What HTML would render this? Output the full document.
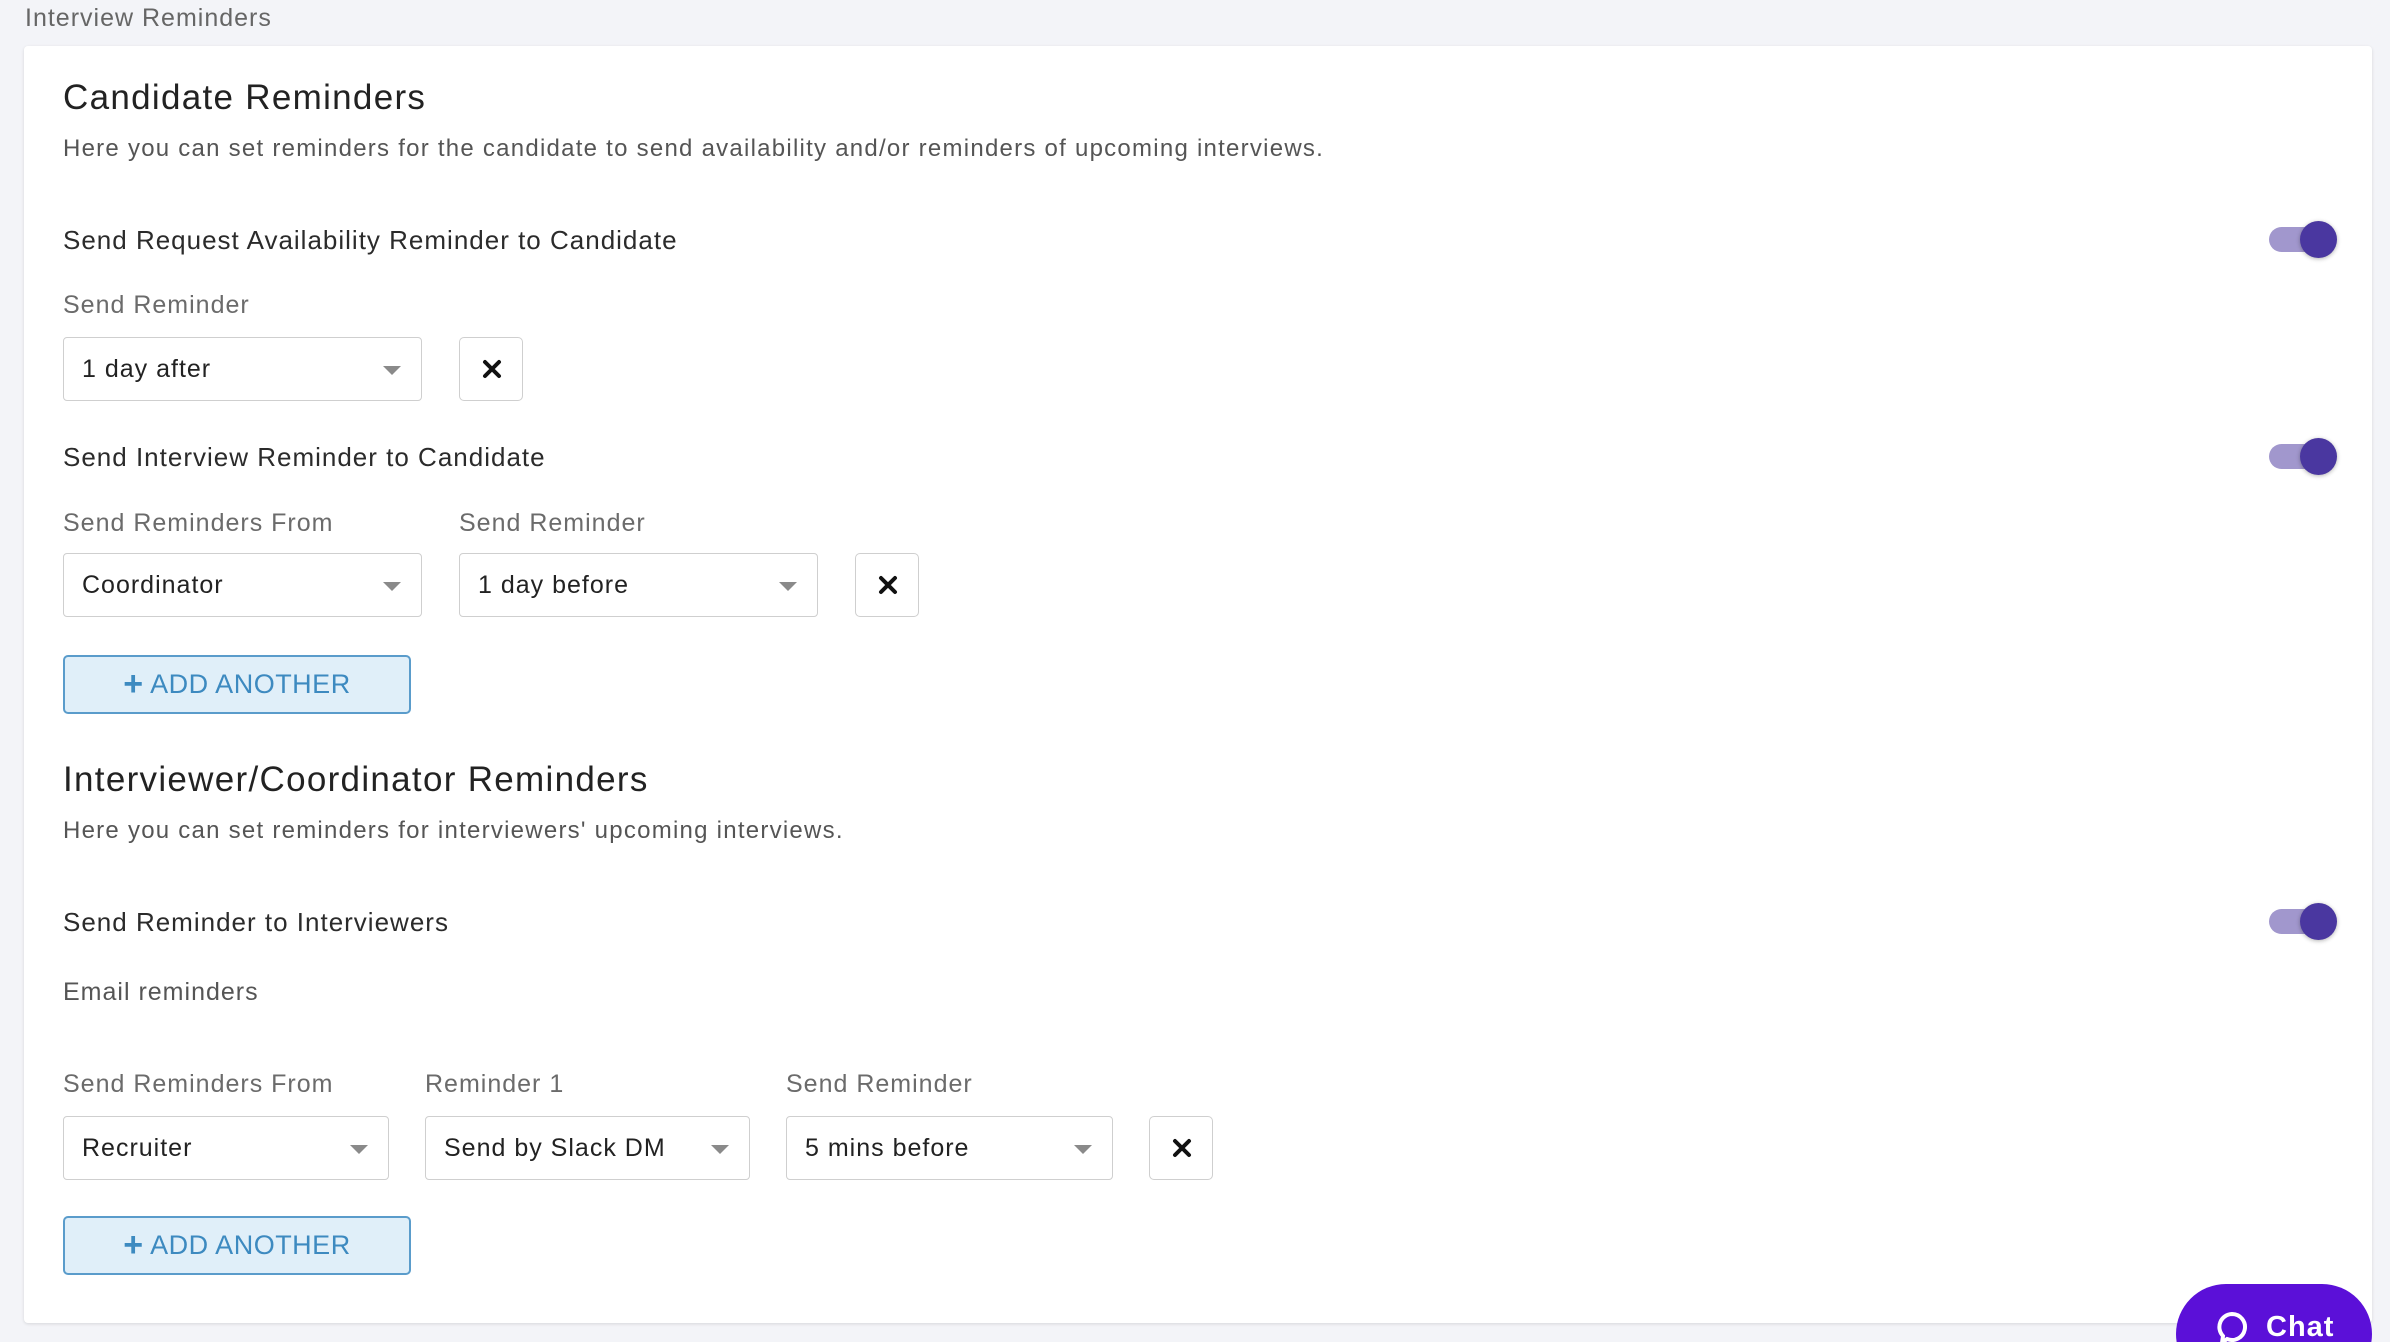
<!DOCTYPE html>
<html style="overflow:hidden;width:2390px;height:1342px"><head><meta charset="utf-8"><style>
*{box-sizing:border-box;margin:0;padding:0}
body{width:2390px;height:1342px;background:#f3f4f8;font-family:"Liberation Sans",sans-serif;position:relative;overflow:hidden;color:#333;letter-spacing:1px}
.a{position:absolute;white-space:nowrap;line-height:1}
.card{position:absolute;left:24px;top:46px;width:2348px;height:1277px;background:#fff;border-radius:4px;box-shadow:0 1px 3px rgba(0,0,0,.12)}
.h{font-size:35px;color:#222;letter-spacing:1.3px}
.d{font-size:24px;color:#555;letter-spacing:1.25px}
.s{font-size:26px;color:#2b2b2b;letter-spacing:1px}
.l{font-size:25px;color:#6b6b6b}
.sel{position:absolute;height:64px;border:1px solid #cfcfcf;border-radius:4px;background:#fff;font-size:25px;color:#222;padding-left:18px;line-height:62px}
.sel:after{content:"";position:absolute;right:20px;top:28px;border-left:9px solid transparent;border-right:9px solid transparent;border-top:9px solid #8a8a8a}
.x{position:absolute;width:64px;height:64px;border:1px solid #cfcfcf;border-radius:5px;background:#fff}
.x svg{position:absolute;left:22px;top:21px}
.tg{position:absolute;width:66px;height:25px;border-radius:13px;background:#a197cd}
.tg:after{content:"";position:absolute;right:-2px;top:-6px;width:37px;height:37px;border-radius:50%;background:#4a37a0;box-shadow:0 1px 4px rgba(0,0,0,.3)}
.btn{position:absolute;left:63px;width:348px;height:59px;background:#e0eff9;border:2px solid #5a9ccb;border-radius:5px;color:#3d8ac0;font-size:27px;text-align:center;line-height:55px;letter-spacing:.5px}
</style></head><body>
<div class="a" style="left:25px;top:6px;font-size:25px;color:#666">Interview Reminders</div>
<div class="card"></div>
<div class="a h" style="left:63px;top:80px">Candidate Reminders</div>
<div class="a d" style="left:63px;top:137px">Here you can set reminders for the candidate to send availability and/or reminders of upcoming interviews.</div>
<div class="a s" style="left:63px;top:227px">Send Request Availability Reminder to Candidate</div>
<div class="tg" style="left:2269px;top:227px"></div>
<div class="a l" style="left:63px;top:293px">Send Reminder</div>
<div class="sel" style="left:63px;top:337px;width:359px">1 day after</div>
<div class="x" style="left:459px;top:337px"><svg width="20" height="20" viewBox="0 0 20 20"><path d="M3 3L17 17M17 3L3 17" stroke="#111" stroke-width="4" stroke-linecap="round"/></svg></div>
<div class="a s" style="left:63px;top:444px">Send Interview Reminder to Candidate</div>
<div class="tg" style="left:2269px;top:444px"></div>
<div class="a l" style="left:63px;top:511px">Send Reminders From</div>
<div class="a l" style="left:459px;top:511px">Send Reminder</div>
<div class="sel" style="left:63px;top:553px;width:359px">Coordinator</div>
<div class="sel" style="left:459px;top:553px;width:359px">1 day before</div>
<div class="x" style="left:855px;top:553px"><svg width="20" height="20" viewBox="0 0 20 20"><path d="M3 3L17 17M17 3L3 17" stroke="#111" stroke-width="4" stroke-linecap="round"/></svg></div>
<div class="btn" style="top:655px"><b style="font-size:34px;vertical-align:-2px">+</b> ADD ANOTHER</div>
<div class="a h" style="left:63px;top:762px">Interviewer/Coordinator Reminders</div>
<div class="a d" style="left:63px;top:819px">Here you can set reminders for interviewers' upcoming interviews.</div>
<div class="a s" style="left:63px;top:909px">Send Reminder to Interviewers</div>
<div class="tg" style="left:2269px;top:909px"></div>
<div class="a l" style="left:63px;top:980px;color:#555">Email reminders</div>
<div class="a l" style="left:63px;top:1072px">Send Reminders From</div>
<div class="a l" style="left:425px;top:1072px">Reminder 1</div>
<div class="a l" style="left:786px;top:1072px">Send Reminder</div>
<div class="sel" style="left:63px;top:1116px;width:326px">Recruiter</div>
<div class="sel" style="left:425px;top:1116px;width:325px">Send by Slack DM</div>
<div class="sel" style="left:786px;top:1116px;width:327px">5 mins before</div>
<div class="x" style="left:1149px;top:1116px"><svg width="20" height="20" viewBox="0 0 20 20"><path d="M3 3L17 17M17 3L3 17" stroke="#111" stroke-width="4" stroke-linecap="round"/></svg></div>
<div class="btn" style="top:1216px"><b style="font-size:34px;vertical-align:-2px">+</b> ADD ANOTHER</div>
<div style="position:absolute;left:2176px;top:1284px;width:196px;height:58px;overflow:hidden"><div style="width:196px;height:100px;border-radius:50px;background:#5b10d8"></div></div>
<svg style="position:absolute;left:2215px;top:1310px" width="36" height="36" viewBox="0 0 36 36"><path d="M17 4a13 13 0 1 1-5 25l-5 4 1-7A13 13 0 0 1 17 4z" fill="none" stroke="#fff" stroke-width="4"/></svg>
<div class="a" style="left:2266px;top:1313px;font-size:29px;font-weight:bold;color:#fff">Chat</div>
</body></html>
